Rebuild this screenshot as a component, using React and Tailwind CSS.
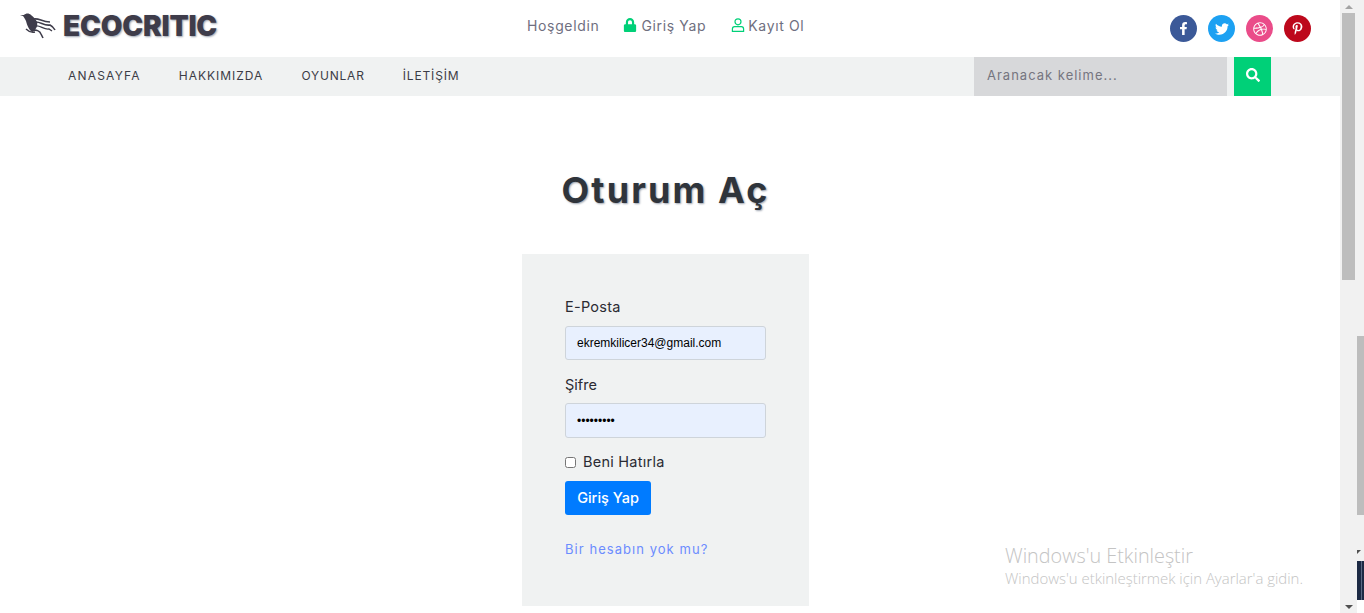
import { FaFacebookF, FaTwitter, FaDribbble, FaPinterestP, FaLock, FaSearch } from 'react-icons/fa'

const FONT = "font-['Inter','Liberation_Sans',sans-serif]"

const SOCIALS = [
  { id: 'fb', bg: 'bg-[#3b5998]', icon: <FaFacebookF size={13} /> },
  { id: 'tw', bg: 'bg-[#1da1f2]', icon: <FaTwitter size={14} /> },
  { id: 'dr', bg: 'bg-[#ea4c89]', icon: <FaDribbble size={14} /> },
  { id: 'pi', bg: 'bg-[#bd081c]', icon: <FaPinterestP size={13} /> },
]

const NAV = [
  { label: 'ANASAYFA', cls: 'tracking-[1.2px]' },
  { label: 'HAKKIMIZDA', cls: 'tracking-[1px]' },
  { label: 'OYUNLAR', cls: 'tracking-[0.8px]' },
  { label: 'İLETİŞİM', cls: 'tracking-[0.85px]' },
]

function Logo() {
  return (
    <svg width="38" height="27" viewBox="0 0 38 27" className="shrink-0">
      <path d="M1 2 L5 2 C7 0 10 0 12 2 C15 4 17 7 18 9 C19 13 17 17 13 19 C10 17 8 12 7 8 C6 6 5 4 4 3 Z" fill="#3e3c4a" />
      <path d="M15 6 C20 5 23 9 31 9" stroke="#3e3c4a" strokeWidth="1.6" fill="none" />
      <path d="M17 9 C22 9 25 13 31 12 C33 13 35 15 36 17" stroke="#3e3c4a" strokeWidth="1.6" fill="none" />
      <path d="M17 13 C21 12 25 17 30 16 L33 18" stroke="#3e3c4a" strokeWidth="1.4" fill="none" />
      <path d="M13 18 C17 16 21 18 22 21 L24 25" stroke="#3e3c4a" strokeWidth="1.6" fill="none" />
      <path d="M7 16 C9 18 12 20 16 19" stroke="#3e3c4a" strokeWidth="1.4" fill="none" />
    </svg>
  )
}

function UserOutline() {
  return (
    <svg width="14" height="14" viewBox="0 0 14 14" fill="none" stroke="#00d078" strokeWidth="1.2" className="ml-[25px] mr-[3px]">
      <circle cx="7" cy="3.8" r="3" />
      <path d="M3.6 8.6 H10.4 C11.6 8.6 12.6 9.8 12.6 11 V13.4 H1.4 V11 C1.4 9.8 2.4 8.6 3.6 8.6 Z" />
    </svg>
  )
}

function Scrollbar() {
  return (
    <div className="w-6 shrink-0 h-full bg-[#f1f1f1] flex">
      <div className="w-[17px] flex flex-col items-center">
        <div className="h-[13px] flex items-center justify-center">
          <div className="w-0 h-0 border-x-[4px] border-x-transparent border-b-[4px] border-b-[#a3a3a3]" />
        </div>
        <div className="w-[13px] h-[267px] bg-[#bdbdbd]" />
        <div className="flex-1" />
        <div className="h-[13px] flex items-center justify-center">
          <div className="w-0 h-0 border-x-[4px] border-x-transparent border-t-[4px] border-t-[#505050]" />
        </div>
      </div>
      {/* second scrollbar from the page behind */}
      <div className="flex-1 flex flex-col pt-[336px]">
        <div className="h-[179px] bg-[#bdbdbd]" />
        <div className="h-[35px]" />
        <div className="h-[4px] w-[4px] bg-[#505050] [clip-path:polygon(0_0,100%_0,0_100%)]" />
        <div className="h-[7px]" />
        <div className="h-[39px] flex bg-[#1c2a44]">
          <div className="w-[4px]" />
          <div className="w-[1px] bg-[#5a6a84]" />
        </div>
        <div className="flex-1 bg-white" />
      </div>
    </div>
  )
}

export default function App() {
  return (
    <div className={`h-[613px] w-[1364px] flex overflow-hidden bg-white relative ${FONT}`}>
      <div className="flex-1 min-w-0 flex flex-col">
        {/* top bar */}
        <div className="h-[57px] flex items-center relative">
          <div className="w-[515px] pl-[19px] flex items-center gap-[6px] pb-[5px]">
            <Logo />
            <span className="text-[28px] font-black text-[#3e3c4a] tracking-[-0.2px] [text-shadow:1px_1px_2px_#9ca3af]">ECOCRITIC</span>
          </div>
          <div className="flex items-center pb-[7px] pl-3 text-[14px] tracking-[0.65px] text-[#6f6f80]">
            <span>Hoşgeldin</span>
            <FaLock size={14} className="text-[#00d078] ml-[24px] mr-[4px]" />
            <span>Giriş Yap</span>
            <UserOutline />
            <span>Kayıt Ol</span>
          </div>
          <div className="ml-auto mr-[29px] flex gap-[11px]">
            {SOCIALS.map(s => (
              <div key={s.id} className={`w-[27px] h-[27px] rounded-full flex items-center justify-center text-white ${s.bg}`}>
                {s.icon}
              </div>
            ))}
          </div>
        </div>

        {/* nav */}
        <div className="h-[39px] bg-[#f0f2f2] flex items-center pl-[68px]">
          <div className="flex gap-[38px] pb-[2px] text-[12px] text-[#3c3c46]">
            {NAV.map(n => <span key={n.label} className={n.cls}>{n.label}</span>)}
          </div>
          <div className="ml-auto flex h-full mr-[69px]">
            <div className="w-[253px] bg-[#d7d8da] flex items-center pl-[13px] pb-[2px] text-[13px] tracking-[1px] text-[#75757f]">Aranacak kelime...</div>
            <div className="w-[37px] ml-[7px] bg-[#00d078] flex items-center justify-center text-white pb-[3px]">
              <FaSearch size={14} />
            </div>
          </div>
        </div>

        {/* login */}
        <div className="flex-1 flex flex-col items-center pr-[9px]">
          <h1 className="mt-[70px] h-[48px] text-[36px] leading-[48px] font-bold text-[#2f343b] tracking-[2.1px] [text-shadow:1px_1px_2px_#9ca3af]">Oturum Aç</h1>
          <div className="mt-[40px] w-[287px] h-[352px] bg-[#f0f2f2] px-[43px] pt-[43px]">
            <div className="text-[14.5px] leading-5 tracking-[0.25px] text-[#2b2b33]">E-Posta</div>
            <div className="mt-[9px] h-[34px] w-[201px] rounded-[3px] border border-[#ced4da] bg-[#e8f0fe] flex items-center pl-[11px] text-[12px] text-black font-['Liberation_Sans',sans-serif]">ekremkilicer34@gmail.com</div>
            <div className="mt-[15px] text-[14.5px] leading-5 text-[#2b2b33]">Şifre</div>
            <div className="mt-[8px] h-[35px] w-[201px] rounded-[3px] border border-[#ced4da] bg-[#e8f0fe] flex items-center pl-[11px] text-[12px] text-black font-['Liberation_Sans',sans-serif]">•••••••••</div>
            <div className="mt-[14px] flex items-center h-5">
              <input type="checkbox" className="w-[11px] h-[11px] m-0" />
              <span className="ml-[7px] text-[14.5px] tracking-[0.25px] text-[#2b2b33]">Beni Hatırla</span>
            </div>
            <div className="mt-[9px] w-[86px] h-[34px] rounded-[3px] bg-[#007bff] text-white text-[14.5px] font-medium flex items-center justify-center">Giriş Yap</div>
            <div className="mt-[25px] text-[13px] tracking-[1.05px] text-[#6c8cff]">Bir hesabın yok mu?</div>
          </div>
        </div>
      </div>
      <Scrollbar />

      {/* activation watermark */}
      <div className="absolute left-[1005px] top-[543px] font-['Open_Sans',sans-serif] text-[#c4c4c4]">
        <div className="text-[19.8px] leading-[25px] font-light">Windows'u Etkinleştir</div>
        <div className="text-[14.95px] leading-[20px] font-light">Windows'u etkinleştirmek için Ayarlar'a gidin.</div>
      </div>
    </div>
  )
}
